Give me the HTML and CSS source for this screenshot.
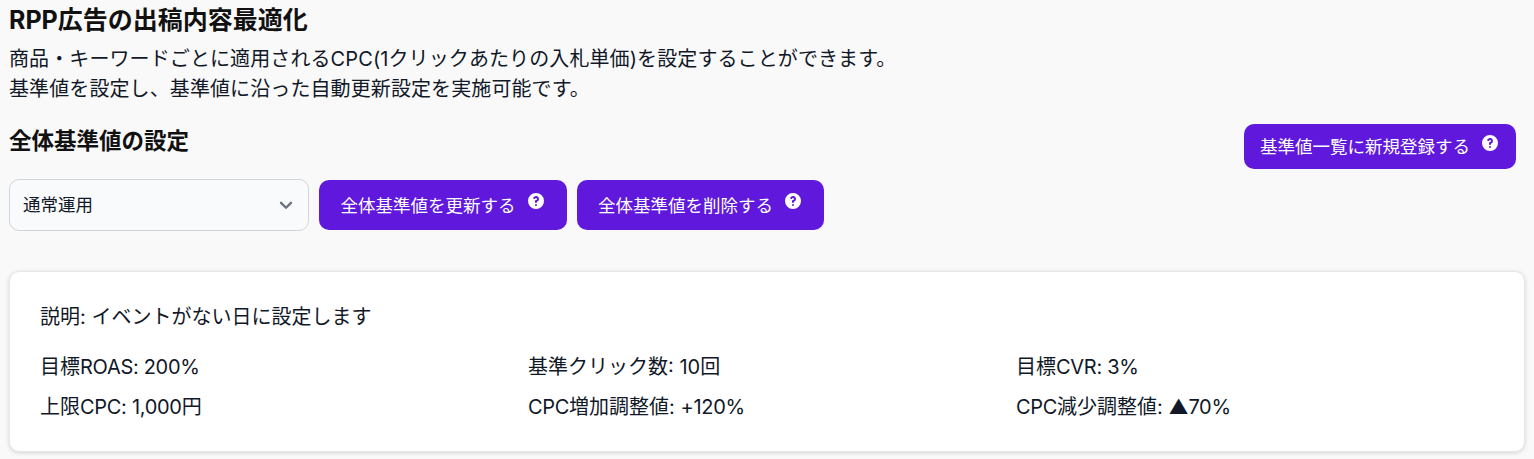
FILE: index.html
```html
<!DOCTYPE html>
<html lang="ja">
<head>
<meta charset="utf-8">
<title>RPP広告の出稿内容最適化</title>
<link rel="stylesheet" href="styles.css">
</head>
<body>
<h1 class="title">RPP広告の出稿内容最適化</h1>
<p class="desc">商品・キーワードごとに適用されるCPC(1クリックあたりの入札単価)を設定することができます。<br>基準値を設定し、基準値に沿った自動更新設定を実施可能です。</p>
<div class="section-head">
  <h2 class="subtitle">全体基準値の設定</h2>
  <button class="btn btn-small">基準値一覧に新規登録する<svg class="help" viewBox="0 0 20 20"><path fill="#fff" fill-rule="evenodd" d="M18 10a8 8 0 1 1-16 0 8 8 0 0 1 16 0zm-8-3a1 1 0 0 0-.87.5 1 1 0 1 1-1.73-1A3 3 0 0 1 13 8a3 3 0 0 1-2 2.83V11a1 1 0 1 1-2 0v-1a1 1 0 0 1 1-1 1 1 0 1 0 0-2zm0 8a1 1 0 1 0 0-2 1 1 0 0 0 0 2z"/></svg></button>
</div>
<div class="controls">
  <div class="select"><span>通常運用</span><svg class="chev" viewBox="0 0 20 20"><path fill="none" stroke="#6b7280" stroke-width="2.2" stroke-linecap="round" stroke-linejoin="round" d="M5.5 8l4.500 4.500L14.500 8"/></svg></div>
  <button class="btn btn-large">全体基準値を更新する<svg class="help" viewBox="0 0 20 20"><path fill="#fff" fill-rule="evenodd" d="M18 10a8 8 0 1 1-16 0 8 8 0 0 1 16 0zm-8-3a1 1 0 0 0-.87.5 1 1 0 1 1-1.73-1A3 3 0 0 1 13 8a3 3 0 0 1-2 2.83V11a1 1 0 1 1-2 0v-1a1 1 0 0 1 1-1 1 1 0 1 0 0-2zm0 8a1 1 0 1 0 0-2 1 1 0 0 0 0 2z"/></svg></button>
  <button class="btn btn-large btn-narrow">全体基準値を削除する<svg class="help" viewBox="0 0 20 20"><path fill="#fff" fill-rule="evenodd" d="M18 10a8 8 0 1 1-16 0 8 8 0 0 1 16 0zm-8-3a1 1 0 0 0-.87.5 1 1 0 1 1-1.73-1A3 3 0 0 1 13 8a3 3 0 0 1-2 2.83V11a1 1 0 1 1-2 0v-1a1 1 0 0 1 1-1 1 1 0 1 0 0-2zm0 8a1 1 0 1 0 0-2 1 1 0 0 0 0 2z"/></svg></button>
</div>
<div class="card">
  <p class="card-desc">説明: イベントがない日に設定します</p>
  <div class="grid">
    <div>目標<span class="lat">ROAS: 200%</span></div>
    <div>基準クリック数: 10回</div>
    <div>目標<span class="lat">CVR: 3%</span></div>
    <div>上限<span class="lat">CPC: 1,000</span>円</div>
    <div><span class="lat">CPC</span>増加調整値: <span class="lat">+120%</span></div>
    <div><span class="lat">CPC</span>減少調整値: <span class="lat">▲70%</span></div>
  </div>
</div>
</body>
</html>
```
FILE: styles.css
```css
* { box-sizing: border-box; }
html, body { margin: 0; height: 459px; overflow: hidden; }
body {
  background: #f9f9f9;
  color: #111827;
  font-family: Inter, "Noto Sans CJK JP", sans-serif;
  padding: 0 9px;
}
.title { margin: 0; padding-top: 5px; font-size: 25px; line-height: 30px; font-weight: 700; color: #111; }
.desc { margin: 9px 0 0; font-size: 20px; line-height: 30px; letter-spacing: .1px; color: #111827; }
.section-head { display: flex; justify-content: space-between; align-items: flex-start; margin-top: 20px; padding-right: 9px; }
.subtitle { margin: 2px 0 0; font-size: 22.5px; line-height: 30px; font-weight: 700; color: #111; }
.controls { display: flex; align-items: center; gap: 10px; margin-top: 10px; }
.select {
  width: 300px; height: 52px; display: flex; align-items: center; justify-content: space-between;
  padding: 0 11px 0 13px; background: #f8fafc; border: 1px solid #d1d5db; border-radius: 10px;
  font-size: 17.5px; color: #111827;
}
.select span { margin-top: -3px; }
.chev { width: 22px; height: 22px; margin-top: -1px; }
.btn {
  display: flex; align-items: center; justify-content: center; border: 0; border-radius: 10px;
  background: #5f18dc; color: #fff; font-family: inherit; font-size: 17.5px; padding: 0 0 2px;
}
.btn-small { width: 272px; height: 45px; }
.btn-large { height: 50px; width: 248px; }
.btn-narrow { width: 247px; }
.help { width: 20px; height: 20px; margin: -6px 0 0 10px; }
.card {
  margin-top: 40px; width: 1516px; height: 181px; background: #fff; border: 1px solid #e5e7eb; border-radius: 10px;
  box-shadow: 0 1px 4px rgba(0,0,0,.15); padding: 31px 30px;
  font-size: 20px; color: #111827;
}
.card-desc { margin: 0; line-height: 28px; }
.grid { display: grid; grid-template-columns: repeat(3, 488px); row-gap: 12px; margin-top: 22px; line-height: 28px; }
.lat { letter-spacing: -.3px; }
```
